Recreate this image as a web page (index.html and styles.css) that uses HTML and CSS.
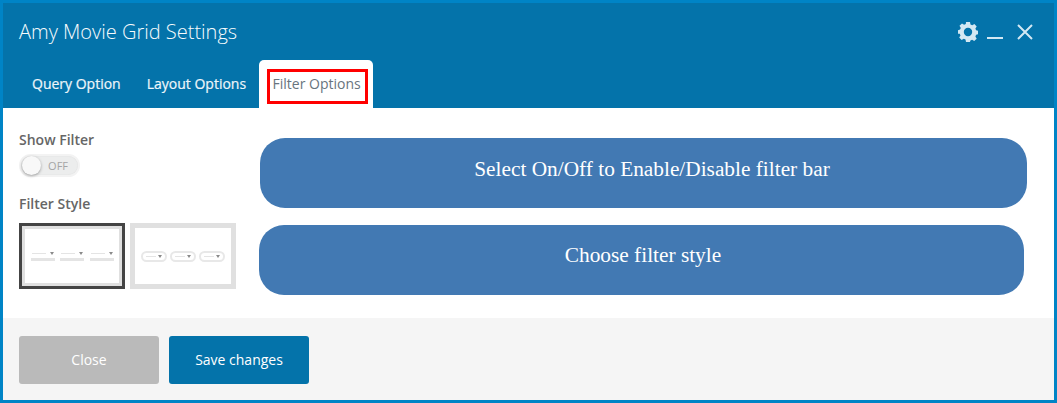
FILE: index.html
```html
<!DOCTYPE html>
<html lang="en">
<head>
<meta charset="utf-8">
<title>Amy Movie Grid Settings</title>
<link rel="stylesheet" href="styles.css">
</head>
<body>
<div class="modal">
  <header class="head">
    <div class="title-row">
      <h1 class="title">Amy Movie Grid Settings</h1>
      <div class="actions">
        <svg class="icon" width="20" height="20" viewBox="0 0 20 20"><path fill="#d3e8f3" fill-rule="evenodd" d="M8 0h4l.5 2.500 1.700.7 2.200-1.300 2.300 2.500-1.300 2.100.7 1.700 2.100.5v3.600l-2.100.5-.7 1.700 1.300 2.200-2.500 2.400-2.100-1.300-1.700.7L12 20H8l-.5-2.500-1.700-.7-2.200 1.300-2.400-2.500 1.300-2.100-.7-1.700L0 11.800V8.200l2.100-.6.7-1.700-1.300-2.100 2.500-2.400 2.100 1.300 1.700-.7z M10 5.800a4.200 4.200 0 1 0 0 8.400a4.200 4.200 0 0 0 0-8.400z"/></svg>
        <span class="minimize"></span>
        <svg class="icon close-icon" width="18" height="18" viewBox="0 0 18 18"><path stroke="#d3e8f3" stroke-width="2" fill="none" d="M2 2l14 14M16 2L2 16"/></svg>
      </div>
    </div>
    <nav class="tabs">
      <a class="tab">Query Option</a>
      <a class="tab">Layout Options</a>
      <a class="tab active"><span class="tab-label">Filter Options</span></a>
    </nav>
  </header>
  <main class="body">
    <section class="options">
      <h2 class="label">Show Filter</h2>
      <div class="toggle"><span class="knob"></span><span class="toggle-text">OFF</span></div>
      <h2 class="label style-label">Filter Style</h2>
      <div class="styles">
        <div class="style selected">
          <div class="mini"><div class="mini-top"><i></i><b></b></div><div class="mini-bar"></div></div>
          <div class="mini"><div class="mini-top"><i></i><b></b></div><div class="mini-bar"></div></div>
          <div class="mini"><div class="mini-top"><i></i><b></b></div><div class="mini-bar"></div></div>
        </div>
        <div class="style pills">
          <div class="pill"><i></i><b></b></div>
          <div class="pill"><i></i><b></b></div>
          <div class="pill"><i></i><b></b></div>
        </div>
      </div>
    </section>
    <div class="note note-one">Select On/Off to Enable/Disable filter bar</div>
    <div class="note note-two">Choose filter style</div>
  </main>
  <footer class="foot">
    <button class="btn btn-close">Close</button>
    <button class="btn btn-save">Save changes</button>
  </footer>
</div>
</body>
</html>
```
FILE: styles.css
```css
* { box-sizing: border-box; }
html, body { margin: 0; padding: 0; }
body { font-family: "Open Sans", sans-serif; background: #fff; }
.modal {
  width: 1057px;
  height: 403px;
  border: 3px solid #0084c6;
  display: flex;
  flex-direction: column;
  overflow: hidden;
}
.head { background: #0473aa; height: 105px; flex: none; display: flex; flex-direction: column; }
.title-row { display: flex; justify-content: space-between; align-items: center; height: 57px; padding: 0 20px 0 16px; }
.title { margin: 0; font-size: 20px; font-weight: 300; color: #f7fbfd; }
.actions { display: flex; align-items: center; gap: 9px; }
.icon { display: block; }
.close-icon { margin-left: 4px; }
.minimize { width: 16px; height: 2px; background: #d3e8f3; margin-top: 13px; }
.tabs { display: flex; padding-left: 16px; height: 48px; }
.tab { font-size: 14px; font-weight: 400; color: #eef6fa; padding: 14px 13px 0; white-space: nowrap; line-height: 20px; -webkit-text-stroke: .2px #eef6fa; }
.active { background: #fff; border-radius: 5px 5px 0 0; padding: 9px 5px 4px 8px; width: 114px; -webkit-text-stroke: 0; }
.tab-label {
  display: block;
  width: 101px;
  height: 35px;
  border: 3px solid #f00;
  color: #68747e;
  font-weight: 400;
  text-align: center;
  line-height: 24px;
  font-size: 14px;
  padding-right: 2px;
}
.body { flex: 1; position: relative; background: #fff; padding: 22px 16px 0; }
.label { margin: 0; font-size: 14px; line-height: 20px; font-weight: 600; color: #666; }
.toggle {
  margin-top: 4px;
  width: 61px;
  height: 23px;
  border-radius: 12px;
  background: #eceded;
  border: 2px solid #f3f3f3;
  position: relative;
  display: flex;
  align-items: center;
  justify-content: flex-end;
  padding-right: 10px;
  box-shadow: inset 0 0 1px #ccc;
}
.knob {
  position: absolute;
  left: 1px;
  top: 0;
  width: 19px;
  height: 19px;
  border-radius: 50%;
  background: #f8f8f8;
  box-shadow: 0 1px 3px rgba(0,0,0,.35);
}
.toggle-text { font-size: 11px; color: #a5a5a5; line-height: 1; }
.style-label { margin-top: 17px; }
.styles { display: flex; gap: 5px; margin-top: 9px; }
.style {
  width: 106px;
  height: 66px;
  border: 5px solid #e0e0e0;
  background: #fff;
  display: flex;
  align-items: center;
  justify-content: center;
  gap: 5.500px;
}
.selected { border: 3px solid #444; box-shadow: inset 0 0 0 3px #e0e0e0; }
.pills { gap: 3px; }
.mini { width: 24px; }
.mini-top { display: flex; justify-content: space-between; align-items: center; height: 4px; padding: 0 1px; }
.mini-top i { width: 14px; height: 1px; background: #e4e4e4; }
.mini-top b { width: 0; height: 0; border: 2.500px solid transparent; border-top: 3px solid #8a8a8a; border-bottom: 0; }
.mini-bar { height: 3px; background: #e4e4e4; margin-top: 2px; }
.pill { width: 26px; height: 11px; border: 2px solid #e8e8e8; border-radius: 6px; display: flex; align-items: center; gap: 2px; padding: 0 3px; }
.pill i { width: 10px; height: 1px; background: #e4e4e4; }
.pill b { width: 0; height: 0; border: 2px solid transparent; border-top: 3px solid #8a8a8a; border-bottom: 0; }
.note {
  position: absolute;
  height: 70px;
  background: #4279b3;
  color: #fff;
  border-radius: 25px;
  font-family: "Liberation Serif", serif;
  font-size: 21.330px;
  display: flex;
  align-items: center;
  justify-content: center;
  padding-bottom: 8px;
}
.note-one { left: 257px; top: 30px; width: 767px; padding-left: 17px; }
.note-two { left: 256px; top: 117px; width: 765px; padding-bottom: 10px; padding-left: 3px; }
.foot { height: 82px; flex: none; background: #f5f5f5; display: flex; gap: 10px; padding: 18px 16px 0; }
.btn { width: 140px; height: 48px; border: 0; border-radius: 3px; font: 400 14px "Open Sans", sans-serif; color: #fff; padding: 0 0 2px; }
.btn-close { background: #bababa; }
.btn-save { background: #0473aa; }
```
